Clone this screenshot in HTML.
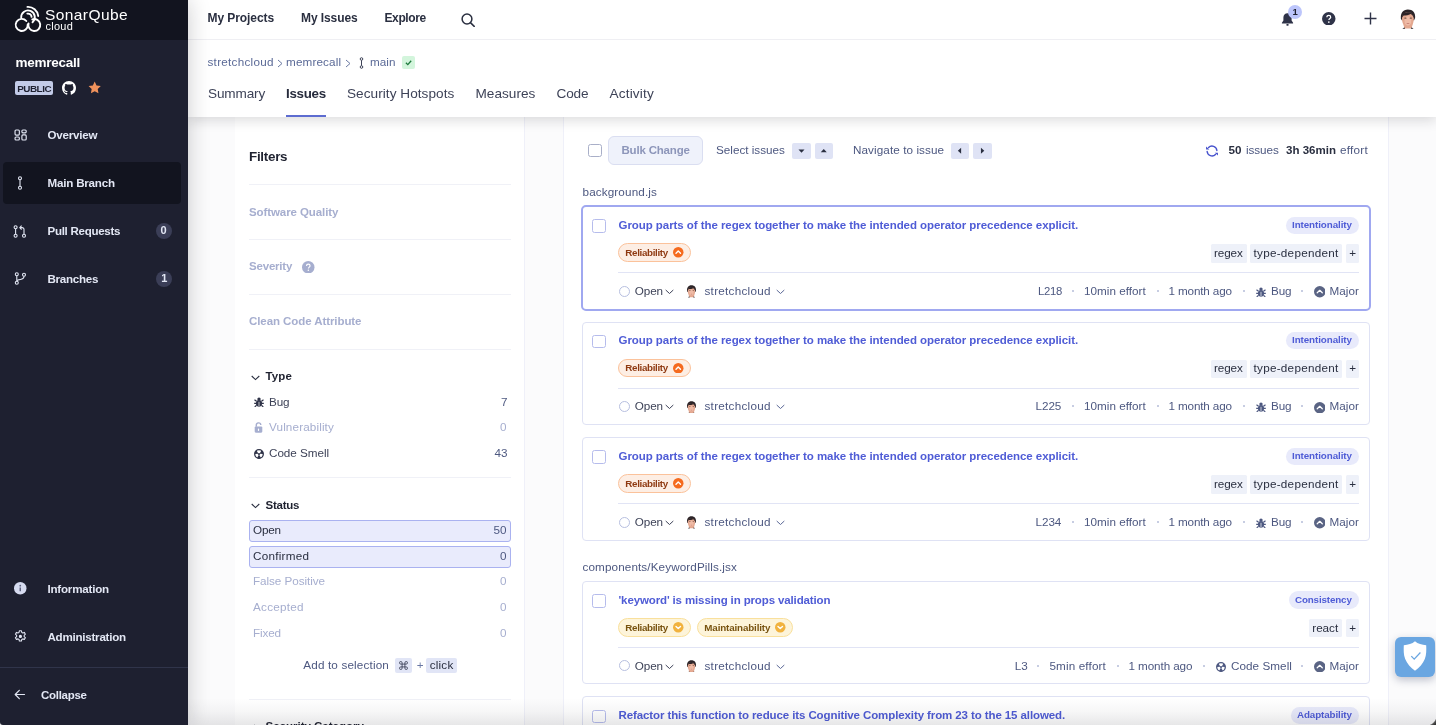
<!DOCTYPE html>
<html lang="en"><head><meta charset="utf-8"><title>memrecall - Issues</title>
<style>
*{box-sizing:border-box;margin:0;padding:0}
html,body{width:1436px;height:725px;overflow:hidden;background:#fff}
body{font-family:"Liberation Sans",sans-serif;position:relative}
.root{position:absolute;left:0;top:0;width:1436px;height:725px;overflow:hidden;will-change:transform;background:#fff}
.b{position:absolute;display:block}
.t{position:absolute;white-space:nowrap;line-height:normal;display:block}
</style></head>
<body>
<div class="root">
<div class="b" style="left:188px;top:0px;width:1248px;height:725px;background:#fbfbfc;"></div>
<div class="b" style="left:235px;top:117px;width:289.5px;height:608px;background:#fff;border-right:1.5px solid #eff0f9;"></div>
<div class="b" style="left:562.5px;top:117px;width:826.5px;height:608px;background:#fff;border-left:1.5px solid #eff0f9;border-right:1.5px solid #eff0f9;"></div>
<span class="t" style="left:249.00px;top:149px;font-size:13.41px;font-weight:700;color:#1f2230;letter-spacing:-0.280px;">Filters</span>
<div class="b" style="left:249px;top:184.0px;width:261.8px;height:1px;background:#f0f1f7;"></div>
<div class="b" style="left:249px;top:239.0px;width:261.8px;height:1px;background:#f0f1f7;"></div>
<div class="b" style="left:249px;top:294.0px;width:261.8px;height:1px;background:#f0f1f7;"></div>
<div class="b" style="left:249px;top:349.0px;width:261.8px;height:1px;background:#f0f1f7;"></div>
<div class="b" style="left:249px;top:477.0px;width:261.8px;height:1px;background:#f0f1f7;"></div>
<div class="b" style="left:249px;top:698.5px;width:261.8px;height:1px;background:#f0f1f7;"></div>
<span class="t" style="left:249.00px;top:206px;font-size:11.5px;font-weight:700;color:#a6aecf;letter-spacing:-0.090px;">Software Quality</span>
<span class="t" style="left:249.00px;top:260px;font-size:11.5px;font-weight:700;color:#a6aecf;letter-spacing:-0.194px;">Severity</span>
<svg class="b" style="left:302px;top:260.5px;" width="12.5" height="12.5" viewBox="0 0 16 16"><circle cx="8" cy="8" r="8" fill="#a6aecf"/><path d="M5.800 6.300c0-1.300 1-2.200 2.300-2.200 1.300 0 2.200.8 2.200 2 0 1.700-2.100 1.700-2.100 3.500" fill="none" stroke="#fff" stroke-width="1.500"/><circle cx="8.100" cy="11.900" r="1" fill="#fff"/></svg>
<span class="t" style="left:249.00px;top:315px;font-size:11.5px;font-weight:700;color:#a6aecf;letter-spacing:-0.077px;">Clean Code Attribute</span>
<svg class="b" style="left:251.3px;top:374.8px;" width="9" height="6" viewBox="0 0 9 6"><path d="M.7 1l3.800 3.600L8.300 1" fill="none" stroke="#2a2f40" stroke-width="1.050"/></svg>
<span class="t" style="left:265.50px;top:370px;font-size:11.5px;font-weight:700;color:#1f2230;letter-spacing:0.136px;">Type</span>
<svg class="b" style="left:254px;top:397.3px;" width="10" height="10" viewBox="0 0 10 10"><g fill="#2f3348"><path d="M1.900 6.300C1.900 4.200 3.200 3 5 3s3.100 1.200 3.100 3.300c0 2-1.300 3.400-3.100 3.400S1.900 8.300 1.900 6.300z"/><ellipse cx="5" cy="2" rx="1.700" ry="1.500"/><path d="M.5 2.700l2 1.600M9.500 2.700l-2 1.600M.2 6.300h2M9.800 6.300h-2M.7 9.900l1.900-1.700M9.300 9.900L7.400 8.200" stroke="#2f3348" stroke-width="1.150" fill="none"/><rect x="4.650" y="4.800" width=".7" height="4.600" fill="#fff"/></g></svg>
<span class="t" style="left:269.00px;top:395px;font-size:11.7px;font-weight:400;color:#3e4358;letter-spacing:-0.148px;">Bug</span>
<span class="t" style="left:501.00px;top:395px;font-size:11.7px;font-weight:400;color:#4d5880;">7</span>
<svg class="b" style="left:254.3px;top:422.3px;" width="9" height="11" viewBox="0 0 9 11"><rect x=".7" y="4.500" width="7.600" height="6.200" rx="1.100" fill="#a6aecf"/><path d="M2.300 4.800V3.300a2.250 2.250 0 0 1 4.500 -.3" fill="none" stroke="#a6aecf" stroke-width="1.400"/><rect x="3.900" y="6.600" width="1.200" height="2.300" rx=".4" fill="#fff"/></svg>
<span class="t" style="left:269.00px;top:420px;font-size:11.7px;font-weight:400;color:#a6aecf;letter-spacing:0.134px;">Vulnerability</span>
<span class="t" style="left:500.00px;top:420px;font-size:11.7px;font-weight:400;color:#a6aecf;">0</span>
<svg class="b" style="left:254px;top:449px;" width="10" height="10" viewBox="0 0 10 10"><circle cx="5" cy="5" r="4.300" fill="none" stroke="#2f3348" stroke-width="1.300"/><circle cx="5" cy="5" r="1.100" fill="#2f3348"/><path d="M5 5L5 9.300M5 5L1.300 2.900M5 5L8.700 2.900" stroke="#2f3348" stroke-width="0" fill="none"/><path d="M5 5.600L3 9.100A4.300 4.300 0 0 0 7 9.100zM4.400 4.700L2.400 1.300A4.300 4.300 0 0 0 .7 4.900zM5.600 4.700L7.600 1.300A4.300 4.300 0 0 1 9.300 4.900z" fill="#2f3348"/></svg>
<span class="t" style="left:269.00px;top:446px;font-size:11.7px;font-weight:400;color:#3e4358;letter-spacing:-0.035px;">Code Smell</span>
<span class="t" style="left:494.50px;top:446px;font-size:11.7px;font-weight:400;color:#4d5880;">43</span>
<svg class="b" style="left:251.3px;top:503.3px;" width="9" height="6" viewBox="0 0 9 6"><path d="M.7 1l3.800 3.600L8.300 1" fill="none" stroke="#2a2f40" stroke-width="1.050"/></svg>
<span class="t" style="left:265.50px;top:499px;font-size:11.5px;font-weight:700;color:#1f2230;letter-spacing:-0.250px;">Status</span>
<div class="b" style="left:249px;top:520px;width:261.8px;height:22px;background:#e9ebfc;border:1px solid #aab2f0;border-radius:3px;"></div>
<span class="t" style="left:253.00px;top:523px;font-size:11.7px;font-weight:400;color:#2a2f40;letter-spacing:-0.197px;">Open</span>
<span class="t" style="left:493.50px;top:523px;font-size:11.7px;font-weight:400;color:#4d5880;">50</span>
<div class="b" style="left:249px;top:545.5px;width:261.8px;height:22px;background:#e9ebfc;border:1px solid #aab2f0;border-radius:3px;"></div>
<span class="t" style="left:253.00px;top:549px;font-size:11.7px;font-weight:400;color:#2a2f40;letter-spacing:0.261px;">Confirmed</span>
<span class="t" style="left:500.00px;top:549px;font-size:11.7px;font-weight:400;color:#4d5880;">0</span>
<span class="t" style="left:253.00px;top:574px;font-size:11.7px;font-weight:400;color:#a6aecf;letter-spacing:-0.058px;">False Positive</span>
<span class="t" style="left:500.00px;top:574px;font-size:11.7px;font-weight:400;color:#a6aecf;">0</span>
<span class="t" style="left:253.00px;top:600px;font-size:11.7px;font-weight:400;color:#a6aecf;letter-spacing:0.253px;">Accepted</span>
<span class="t" style="left:500.00px;top:600px;font-size:11.7px;font-weight:400;color:#a6aecf;">0</span>
<span class="t" style="left:253.00px;top:626px;font-size:11.7px;font-weight:400;color:#a6aecf;letter-spacing:-0.145px;">Fixed</span>
<span class="t" style="left:500.00px;top:626px;font-size:11.7px;font-weight:400;color:#a6aecf;">0</span>
<span class="t" style="left:303.30px;top:658px;font-size:11.7px;font-weight:400;color:#4d5880;letter-spacing:0.156px;">Add to selection</span>
<div class="b" style="left:395.4px;top:657.7px;width:16.8px;height:15.3px;background:#e1e5f6;border-radius:2px;"></div>
<svg class="b" style="left:399px;top:660.9px;" width="9" height="9" viewBox="0 0 9 9"><path d="M3.100 3.100V1.800A1.300 1.300 0 1 0 1.800 3.100H7.200A1.300 1.300 0 1 0 5.900 1.800V7.200A1.300 1.300 0 1 0 7.200 5.900H1.800A1.300 1.300 0 1 0 3.100 7.200z" fill="none" stroke="#3a3f55" stroke-width=".85"/></svg>
<span class="t" style="left:416.70px;top:658px;font-size:11.7px;font-weight:400;color:#6a78a4;">+</span>
<div class="b" style="left:426px;top:657.7px;width:31px;height:15.3px;background:#e1e5f6;border-radius:2px;"></div>
<span class="t" style="left:429.80px;top:658px;font-size:11.7px;font-weight:400;color:#2a2f40;letter-spacing:0.180px;">click</span>
<svg class="b" style="left:252.5px;top:724px;" width="6" height="9" viewBox="0 0 6 9"><path d="M1 1l4 3.500-4 3.500" fill="none" stroke="#2a2f40" stroke-width="1.050"/></svg>
<span class="t" style="left:265.50px;top:720px;font-size:11.5px;font-weight:700;color:#1f2230;letter-spacing:-0.002px;">Security Category</span>
<div class="b" style="left:588px;top:144px;width:14px;height:13px;background:#fff;border:1px solid #a9afc8;border-radius:2.5px;"></div>
<div class="b" style="left:608px;top:136px;width:94.5px;height:29px;background:#eff2fb;border:1px solid #dadef1;border-radius:6px;"></div>
<span class="t" style="left:621.50px;top:144px;font-size:11.5px;font-weight:700;color:#8d96ba;letter-spacing:-0.189px;">Bulk Change</span>
<span class="t" style="left:716.00px;top:143px;font-size:11.7px;font-weight:400;color:#4d5880;letter-spacing:-0.001px;">Select issues</span>
<div class="b" style="left:792px;top:143px;width:19px;height:15.5px;background:#dfe3f5;border-radius:2px;"></div>
<svg class="b" style="left:0;top:0" width="1436" height="200"><polygon points="798.5,149.5 804.5,149.5 801.5,152.8" fill="#2a2f40"/></svg>
<div class="b" style="left:814.5px;top:143px;width:18.5px;height:15.5px;background:#dfe3f5;border-radius:2px;"></div>
<svg class="b" style="left:0;top:0" width="1436" height="200"><polygon points="820.75,152.3 826.75,152.3 823.75,149.0" fill="#2a2f40"/></svg>
<span class="t" style="left:853.00px;top:143px;font-size:11.7px;font-weight:400;color:#4d5880;letter-spacing:0.084px;">Navigate to issue</span>
<div class="b" style="left:950.5px;top:143px;width:18.5px;height:15.5px;background:#dfe3f5;border-radius:2px;"></div>
<svg class="b" style="left:0;top:0" width="1436" height="200"><polygon points="961.15,147.8 961.15,153.8 957.85,150.8" fill="#2a2f40"/></svg>
<div class="b" style="left:973px;top:143px;width:18.7px;height:15.5px;background:#dfe3f5;border-radius:2px;"></div>
<svg class="b" style="left:0;top:0" width="1436" height="200"><polygon points="980.95,147.8 980.95,153.8 984.25,150.8" fill="#2a2f40"/></svg>
<svg class="b" style="left:1205.4px;top:143.8px;" width="14" height="14" viewBox="0 0 14 14"><g fill="none" stroke="#4551cd" stroke-width="1.400" stroke-linecap="round"><path d="M11.870 6.490A4.900 4.900 0 0 0 3.540 3.540"/><path d="M2.130 7.510A4.900 4.900 0 0 0 10.460 10.460"/></g><path d="M1.070 2.600V5.500H4.400zM12.930 11.500V8.800H9.700z" fill="#4551cd"/></svg>
<span class="t" style="left:1228.50px;top:143px;font-size:11.7px;font-weight:700;color:#2a2f40;">50</span>
<span class="t" style="left:1246.00px;top:143px;font-size:11.7px;font-weight:400;color:#4d5880;letter-spacing:-0.057px;">issues</span>
<span class="t" style="left:1286.00px;top:144px;font-size:11.5px;font-weight:700;color:#2a2f40;letter-spacing:0.025px;">3h 36min</span>
<span class="t" style="left:1340.00px;top:143px;font-size:11.7px;font-weight:400;color:#4d5880;letter-spacing:0.265px;">effort</span>
<span class="t" style="left:582.50px;top:185px;font-size:11.7px;font-weight:400;color:#4d5880;letter-spacing:0.131px;">background.js</span>
<div class="b" style="left:580.7px;top:205.2px;width:790.3px;height:105.79999999999998px;background:#fff;border:2px solid #a0a8f0;border-radius:5px;"></div>
<div class="b" style="left:592.3px;top:219.0px;width:13.7px;height:13.7px;background:#fff;border:1px solid #b6bcec;border-radius:2.5px;"></div>
<span class="t" style="left:618.50px;top:219px;font-size:11.5px;font-weight:700;color:#4f5cd6;letter-spacing:-0.059px;">Group parts of the regex together to make the intended operator precedence explicit.</span>
<div class="b" style="left:618px;top:272.0px;width:741px;height:1px;background:#e1e4f5;"></div>
<div class="b" style="left:619px;top:285.5px;width:11px;height:11px;background:#fff;border:1px solid #b7bfe0;border-radius:6px;"></div>
<span class="t" style="left:634.80px;top:284px;font-size:11.7px;font-weight:400;color:#3e4358;letter-spacing:-0.130px;">Open</span>
<svg class="b" style="left:664.8px;top:288.8px;" width="9" height="6" viewBox="0 0 9 6"><path d="M.7 1l3.800 3.500L8.300 1" fill="none" stroke="#3e4358" stroke-width="1"/></svg>
<svg class="b" style="left:686px;top:285.0px;" width="11" height="12.5" viewBox="0 0 16 20"><path d="M.9 9.800C.2 4.200 3 .4 7.900 .4c4.900 0 7.700 3.400 7.200 8.600l-1 2.200H1.800z" fill="#2b2327"/><path d="M2 9c0-3.600 2.400-5.600 5.900-5.600S13.800 5.400 13.800 9c0 2.400-.3 4.400-1 6.300-.6 1.700-1 3-1 4.100H4.200c0-1.100-.4-2.400-1-4.100C2.300 13.400 2 11.400 2 9z" fill="#e3a78f"/><ellipse cx="7.900" cy="11.800" rx="3.400" ry="4.600" fill="#efbba6"/><path d="M1.600 9.600c.2-3.600 1.800-6.400 6.300-6.400 4.300 0 6.200 2.400 6.300 6-.9-1.700-1.700-3.300-3.600-4.200-2.100 1.100-4.900 1.500-6.900 1.500-.9.800-1.600 1.800-2.100 3.100z" fill="#2b2327"/><ellipse cx="5.400" cy="9.100" rx="1.300" ry=".55" fill="#6d4a3c"/><ellipse cx="10.800" cy="9.100" rx="1.300" ry=".55" fill="#6d4a3c"/><ellipse cx="8" cy="14.500" rx="1.600" ry=".5" fill="#c98378"/><path d="M2.600 19.800c.3-.8 1-1.200 2.100-1.300l.4 1.300zM13.400 19.800c-.3-.8-1-1.200-2.100-1.300l-.4 1.300z" fill="#26262c"/></svg>
<span class="t" style="left:704.50px;top:284px;font-size:11.7px;font-weight:400;color:#4d5880;letter-spacing:0.271px;">stretchcloud</span>
<svg class="b" style="left:776.2px;top:288.8px;" width="9" height="6" viewBox="0 0 9 6"><path d="M.7 1l3.800 3.500L8.300 1" fill="none" stroke="#5b6896" stroke-width="1"/></svg>
<div class="b" style="left:618px;top:243.1px;width:72.7px;height:18.5px;background:#fdeee4;border:1px solid #fbc29b;border-radius:9.5px;"></div>
<span class="t" style="left:625.30px;top:247px;font-size:9.8px;font-weight:700;color:#8f3a12;letter-spacing:-0.333px;">Reliability</span>
<svg class="b" style="left:673.0px;top:247.1px;" width="10.5" height="10.5" viewBox="0 0 10.5 10.5"><circle cx="5.250" cy="5.250" r="5.250" fill="#f56a1e"/><path d="M3 6.200L5.250 4l2.250 2.200" fill="none" stroke="#fff" stroke-width="1.400" stroke-linecap="round" stroke-linejoin="round"/></svg>
<div class="b" style="left:1285.5px;top:216.5px;width:73.5px;height:17.3px;background:#e8eafb;border-radius:9px;"></div>
<span class="t" style="left:1292.00px;top:219px;font-size:9.8px;font-weight:700;color:#4f5cd6;letter-spacing:-0.078px;">Intentionality</span>
<div class="b" style="left:1210.5px;top:244.0px;width:36.5px;height:18.5px;background:#eef1f9;border-radius:1.5px;"></div>
<span class="t" style="left:1214.00px;top:246px;font-size:11.7px;font-weight:400;color:#2a2f40;letter-spacing:-0.098px;">regex</span>
<div class="b" style="left:1250px;top:244.0px;width:92px;height:18.5px;background:#eef1f9;border-radius:1.5px;"></div>
<span class="t" style="left:1253.50px;top:246px;font-size:11.7px;font-weight:400;color:#2a2f40;letter-spacing:0.271px;">type-dependent</span>
<div class="b" style="left:1345.5px;top:244.0px;width:13.5px;height:18.5px;background:#eef1f9;border-radius:1.5px;"></div>
<span class="t" style="left:1349.20px;top:246px;font-size:11.7px;font-weight:400;color:#2a2f40;">+</span>
<span class="t" style="left:1038.00px;top:285px;font-size:11.31px;font-weight:400;color:#4d5880;letter-spacing:-0.280px;">L218</span>
<div class="b" style="left:1072px;top:289.7px;width:2px;height:2px;background:#b4bcd9;border-radius:1px;"></div>
<span class="t" style="left:1084.00px;top:284px;font-size:11.7px;font-weight:400;color:#4d5880;letter-spacing:0.022px;">10min effort</span>
<div class="b" style="left:1156.5px;top:289.7px;width:2px;height:2px;background:#b4bcd9;border-radius:1px;"></div>
<span class="t" style="left:1168.50px;top:284px;font-size:11.7px;font-weight:400;color:#4d5880;letter-spacing:-0.148px;">1 month ago</span>
<div class="b" style="left:1242.8px;top:289.7px;width:2px;height:2px;background:#b4bcd9;border-radius:1px;"></div>
<svg class="b" style="left:1256px;top:286.8px;" width="10" height="10" viewBox="0 0 10 10"><g fill="#4d5880"><path d="M1.900 6.300C1.900 4.200 3.200 3 5 3s3.100 1.200 3.100 3.300c0 2-1.300 3.400-3.100 3.400S1.900 8.300 1.900 6.300z"/><ellipse cx="5" cy="2" rx="1.700" ry="1.500"/><path d="M.5 2.700l2 1.600M9.500 2.700l-2 1.600M.2 6.300h2M9.800 6.300h-2M.7 9.900l1.900-1.700M9.300 9.900L7.400 8.200" stroke="#4d5880" stroke-width="1.150" fill="none"/><rect x="4.650" y="4.800" width=".7" height="4.600" fill="#fff"/></g></svg>
<span class="t" style="left:1271.00px;top:284px;font-size:11.7px;font-weight:400;color:#4d5880;letter-spacing:-0.148px;">Bug</span>
<div class="b" style="left:1301px;top:289.7px;width:2px;height:2px;background:#b4bcd9;border-radius:1px;"></div>
<svg class="b" style="left:1313.5px;top:286.0px;" width="11.5" height="11.5" viewBox="0 0 11.5 11.5"><circle cx="5.750" cy="5.750" r="5.750" fill="#5a6484"/><path d="M3.200 6.800L5.750 4.300l2.550 2.500" fill="none" stroke="#fff" stroke-width="1.250" stroke-linecap="round" stroke-linejoin="round"/></svg>
<span class="t" style="left:1329.50px;top:284px;font-size:11.7px;font-weight:400;color:#4d5880;letter-spacing:0.042px;">Major</span>
<div class="b" style="left:581.5px;top:321.5px;width:788.5px;height:103.5px;background:#fff;border:1px solid #dfe2f4;border-radius:4px;"></div>
<div class="b" style="left:592.3px;top:334.5px;width:13.7px;height:13.7px;background:#fff;border:1px solid #b6bcec;border-radius:2.5px;"></div>
<span class="t" style="left:618.50px;top:334px;font-size:11.5px;font-weight:700;color:#4f5cd6;letter-spacing:-0.059px;">Group parts of the regex together to make the intended operator precedence explicit.</span>
<div class="b" style="left:618px;top:387.5px;width:741px;height:1px;background:#e1e4f5;"></div>
<div class="b" style="left:619px;top:401px;width:11px;height:11px;background:#fff;border:1px solid #b7bfe0;border-radius:6px;"></div>
<span class="t" style="left:634.80px;top:399px;font-size:11.7px;font-weight:400;color:#3e4358;letter-spacing:-0.130px;">Open</span>
<svg class="b" style="left:664.8px;top:404.3px;" width="9" height="6" viewBox="0 0 9 6"><path d="M.7 1l3.800 3.500L8.300 1" fill="none" stroke="#3e4358" stroke-width="1"/></svg>
<svg class="b" style="left:686px;top:400.5px;" width="11" height="12.5" viewBox="0 0 16 20"><path d="M.9 9.800C.2 4.200 3 .4 7.900 .4c4.900 0 7.700 3.400 7.200 8.600l-1 2.200H1.800z" fill="#2b2327"/><path d="M2 9c0-3.600 2.400-5.600 5.900-5.600S13.800 5.400 13.800 9c0 2.400-.3 4.400-1 6.300-.6 1.700-1 3-1 4.100H4.200c0-1.100-.4-2.400-1-4.100C2.300 13.400 2 11.400 2 9z" fill="#e3a78f"/><ellipse cx="7.900" cy="11.800" rx="3.400" ry="4.600" fill="#efbba6"/><path d="M1.600 9.600c.2-3.600 1.800-6.400 6.300-6.400 4.300 0 6.200 2.400 6.300 6-.9-1.700-1.700-3.300-3.600-4.200-2.100 1.100-4.900 1.500-6.900 1.500-.9.800-1.600 1.800-2.100 3.100z" fill="#2b2327"/><ellipse cx="5.400" cy="9.100" rx="1.300" ry=".55" fill="#6d4a3c"/><ellipse cx="10.800" cy="9.100" rx="1.300" ry=".55" fill="#6d4a3c"/><ellipse cx="8" cy="14.500" rx="1.600" ry=".5" fill="#c98378"/><path d="M2.600 19.800c.3-.8 1-1.200 2.100-1.300l.4 1.300zM13.400 19.800c-.3-.8-1-1.200-2.100-1.300l-.4 1.300z" fill="#26262c"/></svg>
<span class="t" style="left:704.50px;top:399px;font-size:11.7px;font-weight:400;color:#4d5880;letter-spacing:0.271px;">stretchcloud</span>
<svg class="b" style="left:776.2px;top:404.3px;" width="9" height="6" viewBox="0 0 9 6"><path d="M.7 1l3.800 3.500L8.300 1" fill="none" stroke="#5b6896" stroke-width="1"/></svg>
<div class="b" style="left:618px;top:358.6px;width:72.7px;height:18.5px;background:#fdeee4;border:1px solid #fbc29b;border-radius:9.5px;"></div>
<span class="t" style="left:625.30px;top:362px;font-size:9.8px;font-weight:700;color:#8f3a12;letter-spacing:-0.333px;">Reliability</span>
<svg class="b" style="left:673.0px;top:362.6px;" width="10.5" height="10.5" viewBox="0 0 10.5 10.5"><circle cx="5.250" cy="5.250" r="5.250" fill="#f56a1e"/><path d="M3 6.200L5.250 4l2.250 2.200" fill="none" stroke="#fff" stroke-width="1.400" stroke-linecap="round" stroke-linejoin="round"/></svg>
<div class="b" style="left:1285.5px;top:332px;width:73.5px;height:17.3px;background:#e8eafb;border-radius:9px;"></div>
<span class="t" style="left:1292.00px;top:334px;font-size:9.8px;font-weight:700;color:#4f5cd6;letter-spacing:-0.078px;">Intentionality</span>
<div class="b" style="left:1210.5px;top:359.5px;width:36.5px;height:18.5px;background:#eef1f9;border-radius:1.5px;"></div>
<span class="t" style="left:1214.00px;top:361px;font-size:11.7px;font-weight:400;color:#2a2f40;letter-spacing:-0.098px;">regex</span>
<div class="b" style="left:1250px;top:359.5px;width:92px;height:18.5px;background:#eef1f9;border-radius:1.5px;"></div>
<span class="t" style="left:1253.50px;top:361px;font-size:11.7px;font-weight:400;color:#2a2f40;letter-spacing:0.271px;">type-dependent</span>
<div class="b" style="left:1345.5px;top:359.5px;width:13.5px;height:18.5px;background:#eef1f9;border-radius:1.5px;"></div>
<span class="t" style="left:1349.20px;top:361px;font-size:11.7px;font-weight:400;color:#2a2f40;">+</span>
<span class="t" style="left:1035.60px;top:399px;font-size:11.7px;font-weight:400;color:#4d5880;letter-spacing:-0.100px;">L225</span>
<div class="b" style="left:1072px;top:405.2px;width:2px;height:2px;background:#b4bcd9;border-radius:1px;"></div>
<span class="t" style="left:1084.00px;top:399px;font-size:11.7px;font-weight:400;color:#4d5880;letter-spacing:0.022px;">10min effort</span>
<div class="b" style="left:1156.5px;top:405.2px;width:2px;height:2px;background:#b4bcd9;border-radius:1px;"></div>
<span class="t" style="left:1168.50px;top:399px;font-size:11.7px;font-weight:400;color:#4d5880;letter-spacing:-0.148px;">1 month ago</span>
<div class="b" style="left:1242.8px;top:405.2px;width:2px;height:2px;background:#b4bcd9;border-radius:1px;"></div>
<svg class="b" style="left:1256px;top:402.3px;" width="10" height="10" viewBox="0 0 10 10"><g fill="#4d5880"><path d="M1.900 6.300C1.900 4.200 3.200 3 5 3s3.100 1.200 3.100 3.300c0 2-1.300 3.400-3.100 3.400S1.900 8.300 1.900 6.300z"/><ellipse cx="5" cy="2" rx="1.700" ry="1.500"/><path d="M.5 2.700l2 1.600M9.500 2.700l-2 1.600M.2 6.300h2M9.800 6.300h-2M.7 9.900l1.900-1.700M9.300 9.900L7.400 8.200" stroke="#4d5880" stroke-width="1.150" fill="none"/><rect x="4.650" y="4.800" width=".7" height="4.600" fill="#fff"/></g></svg>
<span class="t" style="left:1271.00px;top:399px;font-size:11.7px;font-weight:400;color:#4d5880;letter-spacing:-0.148px;">Bug</span>
<div class="b" style="left:1301px;top:405.2px;width:2px;height:2px;background:#b4bcd9;border-radius:1px;"></div>
<svg class="b" style="left:1313.5px;top:401.5px;" width="11.5" height="11.5" viewBox="0 0 11.5 11.5"><circle cx="5.750" cy="5.750" r="5.750" fill="#5a6484"/><path d="M3.200 6.800L5.750 4.300l2.550 2.500" fill="none" stroke="#fff" stroke-width="1.250" stroke-linecap="round" stroke-linejoin="round"/></svg>
<span class="t" style="left:1329.50px;top:399px;font-size:11.7px;font-weight:400;color:#4d5880;letter-spacing:0.042px;">Major</span>
<div class="b" style="left:581.5px;top:437px;width:788.5px;height:103.70000000000005px;background:#fff;border:1px solid #dfe2f4;border-radius:4px;"></div>
<div class="b" style="left:592.3px;top:450.0px;width:13.7px;height:13.7px;background:#fff;border:1px solid #b6bcec;border-radius:2.5px;"></div>
<span class="t" style="left:618.50px;top:450px;font-size:11.5px;font-weight:700;color:#4f5cd6;letter-spacing:-0.059px;">Group parts of the regex together to make the intended operator precedence explicit.</span>
<div class="b" style="left:618px;top:503.0px;width:741px;height:1px;background:#e1e4f5;"></div>
<div class="b" style="left:619px;top:516.5px;width:11px;height:11px;background:#fff;border:1px solid #b7bfe0;border-radius:6px;"></div>
<span class="t" style="left:634.80px;top:515px;font-size:11.7px;font-weight:400;color:#3e4358;letter-spacing:-0.130px;">Open</span>
<svg class="b" style="left:664.8px;top:519.8px;" width="9" height="6" viewBox="0 0 9 6"><path d="M.7 1l3.800 3.500L8.300 1" fill="none" stroke="#3e4358" stroke-width="1"/></svg>
<svg class="b" style="left:686px;top:516.0px;" width="11" height="12.5" viewBox="0 0 16 20"><path d="M.9 9.800C.2 4.200 3 .4 7.900 .4c4.900 0 7.700 3.400 7.200 8.600l-1 2.200H1.800z" fill="#2b2327"/><path d="M2 9c0-3.600 2.400-5.600 5.900-5.600S13.800 5.400 13.800 9c0 2.400-.3 4.400-1 6.300-.6 1.700-1 3-1 4.100H4.200c0-1.100-.4-2.400-1-4.100C2.300 13.400 2 11.400 2 9z" fill="#e3a78f"/><ellipse cx="7.900" cy="11.800" rx="3.400" ry="4.600" fill="#efbba6"/><path d="M1.600 9.600c.2-3.600 1.800-6.400 6.300-6.400 4.300 0 6.200 2.400 6.300 6-.9-1.700-1.700-3.300-3.600-4.200-2.100 1.100-4.900 1.500-6.900 1.500-.9.800-1.600 1.800-2.100 3.100z" fill="#2b2327"/><ellipse cx="5.400" cy="9.100" rx="1.300" ry=".55" fill="#6d4a3c"/><ellipse cx="10.800" cy="9.100" rx="1.300" ry=".55" fill="#6d4a3c"/><ellipse cx="8" cy="14.500" rx="1.600" ry=".5" fill="#c98378"/><path d="M2.600 19.800c.3-.8 1-1.200 2.100-1.300l.4 1.300zM13.400 19.800c-.3-.8-1-1.200-2.100-1.300l-.4 1.300z" fill="#26262c"/></svg>
<span class="t" style="left:704.50px;top:515px;font-size:11.7px;font-weight:400;color:#4d5880;letter-spacing:0.271px;">stretchcloud</span>
<svg class="b" style="left:776.2px;top:519.8px;" width="9" height="6" viewBox="0 0 9 6"><path d="M.7 1l3.800 3.500L8.300 1" fill="none" stroke="#5b6896" stroke-width="1"/></svg>
<div class="b" style="left:618px;top:474.1px;width:72.7px;height:18.5px;background:#fdeee4;border:1px solid #fbc29b;border-radius:9.5px;"></div>
<span class="t" style="left:625.30px;top:478px;font-size:9.8px;font-weight:700;color:#8f3a12;letter-spacing:-0.333px;">Reliability</span>
<svg class="b" style="left:673.0px;top:478.1px;" width="10.5" height="10.5" viewBox="0 0 10.5 10.5"><circle cx="5.250" cy="5.250" r="5.250" fill="#f56a1e"/><path d="M3 6.200L5.250 4l2.250 2.200" fill="none" stroke="#fff" stroke-width="1.400" stroke-linecap="round" stroke-linejoin="round"/></svg>
<div class="b" style="left:1285.5px;top:447.5px;width:73.5px;height:17.3px;background:#e8eafb;border-radius:9px;"></div>
<span class="t" style="left:1292.00px;top:450px;font-size:9.8px;font-weight:700;color:#4f5cd6;letter-spacing:-0.078px;">Intentionality</span>
<div class="b" style="left:1210.5px;top:475.0px;width:36.5px;height:18.5px;background:#eef1f9;border-radius:1.5px;"></div>
<span class="t" style="left:1214.00px;top:477px;font-size:11.7px;font-weight:400;color:#2a2f40;letter-spacing:-0.098px;">regex</span>
<div class="b" style="left:1250px;top:475.0px;width:92px;height:18.5px;background:#eef1f9;border-radius:1.5px;"></div>
<span class="t" style="left:1253.50px;top:477px;font-size:11.7px;font-weight:400;color:#2a2f40;letter-spacing:0.271px;">type-dependent</span>
<div class="b" style="left:1345.5px;top:475.0px;width:13.5px;height:18.5px;background:#eef1f9;border-radius:1.5px;"></div>
<span class="t" style="left:1349.20px;top:477px;font-size:11.7px;font-weight:400;color:#2a2f40;">+</span>
<span class="t" style="left:1035.60px;top:515px;font-size:11.7px;font-weight:400;color:#4d5880;letter-spacing:-0.100px;">L234</span>
<div class="b" style="left:1072px;top:520.7px;width:2px;height:2px;background:#b4bcd9;border-radius:1px;"></div>
<span class="t" style="left:1084.00px;top:515px;font-size:11.7px;font-weight:400;color:#4d5880;letter-spacing:0.022px;">10min effort</span>
<div class="b" style="left:1156.5px;top:520.7px;width:2px;height:2px;background:#b4bcd9;border-radius:1px;"></div>
<span class="t" style="left:1168.50px;top:515px;font-size:11.7px;font-weight:400;color:#4d5880;letter-spacing:-0.148px;">1 month ago</span>
<div class="b" style="left:1242.8px;top:520.7px;width:2px;height:2px;background:#b4bcd9;border-radius:1px;"></div>
<svg class="b" style="left:1256px;top:517.8px;" width="10" height="10" viewBox="0 0 10 10"><g fill="#4d5880"><path d="M1.900 6.300C1.900 4.200 3.200 3 5 3s3.100 1.200 3.100 3.300c0 2-1.300 3.400-3.100 3.400S1.900 8.300 1.900 6.300z"/><ellipse cx="5" cy="2" rx="1.700" ry="1.500"/><path d="M.5 2.700l2 1.600M9.500 2.700l-2 1.600M.2 6.300h2M9.800 6.300h-2M.7 9.900l1.900-1.700M9.300 9.900L7.400 8.200" stroke="#4d5880" stroke-width="1.150" fill="none"/><rect x="4.650" y="4.800" width=".7" height="4.600" fill="#fff"/></g></svg>
<span class="t" style="left:1271.00px;top:515px;font-size:11.7px;font-weight:400;color:#4d5880;letter-spacing:-0.148px;">Bug</span>
<div class="b" style="left:1301px;top:520.7px;width:2px;height:2px;background:#b4bcd9;border-radius:1px;"></div>
<svg class="b" style="left:1313.5px;top:517.0px;" width="11.5" height="11.5" viewBox="0 0 11.5 11.5"><circle cx="5.750" cy="5.750" r="5.750" fill="#5a6484"/><path d="M3.200 6.800L5.750 4.300l2.550 2.500" fill="none" stroke="#fff" stroke-width="1.250" stroke-linecap="round" stroke-linejoin="round"/></svg>
<span class="t" style="left:1329.50px;top:515px;font-size:11.7px;font-weight:400;color:#4d5880;letter-spacing:0.042px;">Major</span>
<span class="t" style="left:582.50px;top:560px;font-size:11.7px;font-weight:400;color:#4d5880;letter-spacing:0.115px;">components/KeywordPills.jsx</span>
<div class="b" style="left:581.5px;top:580.8px;width:788.5px;height:103.5px;background:#fff;border:1px solid #dfe2f4;border-radius:4px;"></div>
<div class="b" style="left:592.3px;top:593.9px;width:13.7px;height:13.7px;background:#fff;border:1px solid #b6bcec;border-radius:2.5px;"></div>
<span class="t" style="left:618.50px;top:594px;font-size:11.5px;font-weight:700;color:#4f5cd6;letter-spacing:-0.127px;">'keyword' is missing in props validation</span>
<div class="b" style="left:618px;top:646.9px;width:741px;height:1px;background:#e1e4f5;"></div>
<div class="b" style="left:619px;top:660.4px;width:11px;height:11px;background:#fff;border:1px solid #b7bfe0;border-radius:6px;"></div>
<span class="t" style="left:634.80px;top:659px;font-size:11.7px;font-weight:400;color:#3e4358;letter-spacing:-0.130px;">Open</span>
<svg class="b" style="left:664.8px;top:663.6999999999999px;" width="9" height="6" viewBox="0 0 9 6"><path d="M.7 1l3.800 3.500L8.300 1" fill="none" stroke="#3e4358" stroke-width="1"/></svg>
<svg class="b" style="left:686px;top:659.9px;" width="11" height="12.5" viewBox="0 0 16 20"><path d="M.9 9.800C.2 4.200 3 .4 7.900 .4c4.900 0 7.700 3.400 7.200 8.600l-1 2.200H1.800z" fill="#2b2327"/><path d="M2 9c0-3.600 2.400-5.600 5.900-5.600S13.800 5.400 13.800 9c0 2.400-.3 4.400-1 6.300-.6 1.700-1 3-1 4.100H4.200c0-1.100-.4-2.400-1-4.100C2.300 13.400 2 11.400 2 9z" fill="#e3a78f"/><ellipse cx="7.900" cy="11.800" rx="3.400" ry="4.600" fill="#efbba6"/><path d="M1.600 9.600c.2-3.600 1.800-6.400 6.300-6.400 4.300 0 6.200 2.400 6.300 6-.9-1.700-1.700-3.300-3.600-4.200-2.100 1.100-4.900 1.500-6.900 1.500-.9.800-1.600 1.800-2.100 3.100z" fill="#2b2327"/><ellipse cx="5.400" cy="9.100" rx="1.300" ry=".55" fill="#6d4a3c"/><ellipse cx="10.800" cy="9.100" rx="1.300" ry=".55" fill="#6d4a3c"/><ellipse cx="8" cy="14.500" rx="1.600" ry=".5" fill="#c98378"/><path d="M2.600 19.800c.3-.8 1-1.200 2.100-1.300l.4 1.300zM13.400 19.800c-.3-.8-1-1.200-2.100-1.300l-.4 1.300z" fill="#26262c"/></svg>
<span class="t" style="left:704.50px;top:659px;font-size:11.7px;font-weight:400;color:#4d5880;letter-spacing:0.271px;">stretchcloud</span>
<svg class="b" style="left:776.2px;top:663.6999999999999px;" width="9" height="6" viewBox="0 0 9 6"><path d="M.7 1l3.800 3.500L8.300 1" fill="none" stroke="#5b6896" stroke-width="1"/></svg>
<div class="b" style="left:618px;top:618.0px;width:72.7px;height:18.5px;background:#fdf4da;border:1px solid #f9e09c;border-radius:9.5px;"></div>
<span class="t" style="left:625.30px;top:622px;font-size:9.8px;font-weight:700;color:#785310;letter-spacing:-0.333px;">Reliability</span>
<svg class="b" style="left:673.0px;top:622.0px;" width="10.5" height="10.5" viewBox="0 0 10.5 10.5"><circle cx="5.250" cy="5.250" r="5.250" fill="#f1b23e"/><path d="M3 4.400L5.250 6.600l2.250-2.200" fill="none" stroke="#fff" stroke-width="1.400" stroke-linecap="round" stroke-linejoin="round"/></svg>
<div class="b" style="left:697px;top:618.0px;width:95.9px;height:18.5px;background:#fdf4da;border:1px solid #f9e09c;border-radius:9.5px;"></div>
<span class="t" style="left:704.30px;top:622px;font-size:9.8px;font-weight:700;color:#785310;letter-spacing:-0.135px;">Maintainability</span>
<svg class="b" style="left:775.2px;top:622.0px;" width="10.5" height="10.5" viewBox="0 0 10.5 10.5"><circle cx="5.250" cy="5.250" r="5.250" fill="#f1b23e"/><path d="M3 4.400L5.250 6.600l2.250-2.200" fill="none" stroke="#fff" stroke-width="1.400" stroke-linecap="round" stroke-linejoin="round"/></svg>
<div class="b" style="left:1289px;top:591.4px;width:70px;height:17.3px;background:#e8eafb;border-radius:9px;"></div>
<span class="t" style="left:1295.00px;top:594px;font-size:9.8px;font-weight:700;color:#4f5cd6;letter-spacing:-0.141px;">Consistency</span>
<div class="b" style="left:1309px;top:618.9px;width:33px;height:18.5px;background:#eef1f9;border-radius:1.5px;"></div>
<span class="t" style="left:1312.30px;top:621px;font-size:11.7px;font-weight:400;color:#2a2f40;letter-spacing:-0.034px;">react</span>
<div class="b" style="left:1345.5px;top:618.9px;width:13.5px;height:18.5px;background:#eef1f9;border-radius:1.5px;"></div>
<span class="t" style="left:1349.20px;top:621px;font-size:11.7px;font-weight:400;color:#2a2f40;">+</span>
<span class="t" style="left:1014.80px;top:659px;font-size:11.7px;font-weight:400;color:#4d5880;">L3</span>
<div class="b" style="left:1037.4px;top:664.6px;width:2px;height:2px;background:#b4bcd9;border-radius:1px;"></div>
<span class="t" style="left:1049.40px;top:659px;font-size:11.7px;font-weight:400;color:#4d5880;letter-spacing:0.145px;">5min effort</span>
<div class="b" style="left:1117px;top:664.6px;width:2px;height:2px;background:#b4bcd9;border-radius:1px;"></div>
<span class="t" style="left:1128.50px;top:659px;font-size:11.7px;font-weight:400;color:#4d5880;letter-spacing:-0.098px;">1 month ago</span>
<div class="b" style="left:1203.3px;top:664.6px;width:2px;height:2px;background:#b4bcd9;border-radius:1px;"></div>
<svg class="b" style="left:1216.3px;top:661.6999999999999px;" width="10" height="10" viewBox="0 0 10 10"><circle cx="5" cy="5" r="4.300" fill="none" stroke="#4d5880" stroke-width="1.300"/><circle cx="5" cy="5" r="1.100" fill="#4d5880"/><path d="M5 5L5 9.300M5 5L1.300 2.900M5 5L8.700 2.900" stroke="#4d5880" stroke-width="0" fill="none"/><path d="M5 5.600L3 9.100A4.300 4.300 0 0 0 7 9.100zM4.400 4.700L2.400 1.300A4.300 4.300 0 0 0 .7 4.900zM5.600 4.700L7.600 1.300A4.300 4.300 0 0 1 9.300 4.900z" fill="#4d5880"/></svg>
<span class="t" style="left:1231.00px;top:659px;font-size:11.7px;font-weight:400;color:#4d5880;letter-spacing:0.054px;">Code Smell</span>
<div class="b" style="left:1301.2px;top:664.6px;width:2px;height:2px;background:#b4bcd9;border-radius:1px;"></div>
<svg class="b" style="left:1313.5px;top:660.9px;" width="11.5" height="11.5" viewBox="0 0 11.5 11.5"><circle cx="5.750" cy="5.750" r="5.750" fill="#5a6484"/><path d="M3.200 6.800L5.750 4.300l2.550 2.500" fill="none" stroke="#fff" stroke-width="1.250" stroke-linecap="round" stroke-linejoin="round"/></svg>
<span class="t" style="left:1329.50px;top:659px;font-size:11.7px;font-weight:400;color:#4d5880;letter-spacing:0.042px;">Major</span>
<div class="b" style="left:581.5px;top:696.3px;width:788.5px;height:103.70000000000005px;background:#fff;border:1px solid #dfe2f4;border-radius:4px;"></div>
<div class="b" style="left:592.3px;top:709.5px;width:13.7px;height:13.7px;background:#fff;border:1px solid #b6bcec;border-radius:2.5px;"></div>
<span class="t" style="left:618.50px;top:709px;font-size:11.5px;font-weight:700;color:#4f5cd6;letter-spacing:-0.100px;">Refactor this function to reduce its Cognitive Complexity from 23 to the 15 allowed.</span>
<div class="b" style="left:618px;top:762.5px;width:741px;height:1px;background:#e1e4f5;"></div>
<div class="b" style="left:619px;top:776px;width:11px;height:11px;background:#fff;border:1px solid #b7bfe0;border-radius:6px;"></div>
<span class="t" style="left:634.80px;top:774px;font-size:11.7px;font-weight:400;color:#3e4358;letter-spacing:-0.130px;">Open</span>
<svg class="b" style="left:664.8px;top:779.3px;" width="9" height="6" viewBox="0 0 9 6"><path d="M.7 1l3.800 3.500L8.300 1" fill="none" stroke="#3e4358" stroke-width="1"/></svg>
<svg class="b" style="left:686px;top:775.5px;" width="11" height="12.5" viewBox="0 0 16 20"><path d="M.9 9.800C.2 4.200 3 .4 7.900 .4c4.900 0 7.700 3.400 7.200 8.600l-1 2.200H1.800z" fill="#2b2327"/><path d="M2 9c0-3.600 2.400-5.600 5.900-5.600S13.800 5.400 13.800 9c0 2.400-.3 4.400-1 6.300-.6 1.700-1 3-1 4.100H4.200c0-1.100-.4-2.400-1-4.100C2.300 13.400 2 11.400 2 9z" fill="#e3a78f"/><ellipse cx="7.900" cy="11.800" rx="3.400" ry="4.600" fill="#efbba6"/><path d="M1.600 9.600c.2-3.600 1.800-6.400 6.300-6.400 4.300 0 6.200 2.400 6.300 6-.9-1.700-1.700-3.300-3.600-4.200-2.100 1.100-4.900 1.500-6.900 1.500-.9.800-1.600 1.800-2.100 3.100z" fill="#2b2327"/><ellipse cx="5.400" cy="9.100" rx="1.300" ry=".55" fill="#6d4a3c"/><ellipse cx="10.800" cy="9.100" rx="1.300" ry=".55" fill="#6d4a3c"/><ellipse cx="8" cy="14.500" rx="1.600" ry=".5" fill="#c98378"/><path d="M2.600 19.800c.3-.8 1-1.200 2.100-1.300l.4 1.300zM13.400 19.800c-.3-.8-1-1.200-2.100-1.300l-.4 1.300z" fill="#26262c"/></svg>
<span class="t" style="left:704.50px;top:774px;font-size:11.7px;font-weight:400;color:#4d5880;letter-spacing:0.271px;">stretchcloud</span>
<svg class="b" style="left:776.2px;top:779.3px;" width="9" height="6" viewBox="0 0 9 6"><path d="M.7 1l3.800 3.500L8.300 1" fill="none" stroke="#5b6896" stroke-width="1"/></svg>
<div class="b" style="left:1290.7px;top:707px;width:68.29999999999995px;height:17.3px;background:#e8eafb;border-radius:9px;"></div>
<span class="t" style="left:1297.00px;top:709px;font-size:9.8px;font-weight:700;color:#4f5cd6;letter-spacing:-0.111px;">Adaptability</span>
<div class="b" style="left:1395px;top:636.8px;width:40px;height:40.2px;background:#6aa6e1;border-radius:6px;box-shadow:0 3px 8px rgba(30,40,80,.28);"></div>
<svg class="b" style="left:1402.5px;top:641.3px;" width="24" height="30" viewBox="0 0 24 30"><path d="M12 .3C9.200 2.800 5 4 .8 4.200C.6 8.800 .5 13.600 2.200 18C4 22.600 7.600 26.600 12 29.700C16.400 26.600 20 22.600 21.800 18C23.500 13.600 23.400 8.800 23.200 4.200C19 4 14.800 2.800 12 .3Z" fill="#fff"/><path d="M8.300 15.100l2.900 3L17.400 11.500" fill="none" stroke="#6aa6e1" stroke-width="1.300"/></svg>
<div class="b" style="left:188px;top:698px;width:1248px;height:27px;background:linear-gradient(to bottom,rgba(20,20,30,0),rgba(20,20,30,.035) 50%,rgba(20,20,30,.1));"></div>
<div class="b" style="left:1426px;top:715px;width:10px;height:10px;background:radial-gradient(circle at 0 0,rgba(0,0,0,0) 10.200px,#555 11.200px,#333 13px);"></div>
<div class="b" style="left:188px;top:0px;width:1248px;height:116.5px;background:#fff;box-shadow:0 3px 12px rgba(22,22,30,.16);"></div>
<div class="b" style="left:188px;top:38.8px;width:1248px;height:1px;background:#efeff3;"></div>
<span class="t" style="left:207.50px;top:11px;font-size:12.0px;font-weight:700;color:#2a2f40;letter-spacing:-0.069px;">My Projects</span>
<span class="t" style="left:301.00px;top:11px;font-size:12.0px;font-weight:700;color:#2a2f40;letter-spacing:-0.086px;">My Issues</span>
<span class="t" style="left:384.50px;top:11px;font-size:12.0px;font-weight:700;color:#2a2f40;letter-spacing:-0.390px;">Explore</span>
<svg class="b" style="left:460.5px;top:12.5px;" width="14.5" height="14.5" viewBox="0 0 14.5 14.5"><g fill="none" stroke="#2a2f40" stroke-width="1.5" stroke-linecap="round"><circle cx="6" cy="6" r="4.9"/><path d="M9.700 9.900L13.200 13.400"/></g></svg>
<svg class="b" style="left:1280.8px;top:11.7px;" width="13" height="14.5" viewBox="0 0 13 14.5"><path fill="#2f3348" d="M6.500 1.200c-2.500 0-4.100 1.900-4.100 4.300v3L.9 10.700v.9h11.200v-.9l-1.500-2.200v-3c0-2.400-1.600-4.300-4.100-4.300z"/><rect x="5.300" y="12" width="2.400" height="1.800" rx=".8" fill="#2f3348"/></svg>
<div class="b" style="left:1287.7px;top:5px;width:14px;height:14px;background:#bcc5fb;border-radius:7px;"></div>
<span class="t" style="left:1292.60px;top:6px;font-size:9.5px;font-weight:700;color:#1e2030;">1</span>
<svg class="b" style="left:1322px;top:11.8px;" width="13.5" height="13.5" viewBox="0 0 16 16"><circle cx="8" cy="8" r="8" fill="#2f3348"/><path d="M5.800 6.300c0-1.300 1-2.200 2.300-2.200 1.300 0 2.200.8 2.200 2 0 1.700-2.100 1.700-2.100 3.500" fill="none" stroke="#fff" stroke-width="1.500"/><circle cx="8.100" cy="11.900" r="1" fill="#fff"/></svg>
<svg class="b" style="left:1363.8px;top:11.8px;" width="13" height="13" viewBox="0 0 13 13"><path d="M6.500 .5v12M.5 6.500h12" stroke="#2f3348" stroke-width="1.400" fill="none"/></svg>
<svg class="b" style="left:1399.5px;top:9px;" width="16" height="20" viewBox="0 0 16 20"><path d="M.9 9.800C.2 4.200 3 .4 7.900 .4c4.900 0 7.700 3.400 7.200 8.600l-1 2.200H1.800z" fill="#2b2327"/><path d="M2 9c0-3.600 2.400-5.600 5.900-5.600S13.800 5.400 13.800 9c0 2.400-.3 4.400-1 6.300-.6 1.700-1 3-1 4.100H4.200c0-1.100-.4-2.400-1-4.100C2.300 13.400 2 11.400 2 9z" fill="#e3a78f"/><ellipse cx="7.900" cy="11.800" rx="3.400" ry="4.600" fill="#efbba6"/><path d="M1.600 9.600c.2-3.600 1.800-6.400 6.300-6.400 4.300 0 6.200 2.400 6.300 6-.9-1.700-1.700-3.300-3.600-4.200-2.100 1.100-4.900 1.500-6.900 1.500-.9.800-1.600 1.800-2.100 3.100z" fill="#2b2327"/><ellipse cx="5.400" cy="9.100" rx="1.300" ry=".55" fill="#6d4a3c"/><ellipse cx="10.800" cy="9.100" rx="1.300" ry=".55" fill="#6d4a3c"/><ellipse cx="8" cy="14.500" rx="1.600" ry=".5" fill="#c98378"/><path d="M2.600 19.800c.3-.8 1-1.200 2.100-1.300l.4 1.300zM13.400 19.800c-.3-.8-1-1.200-2.100-1.300l-.4 1.300z" fill="#26262c"/></svg>
<span class="t" style="left:207.50px;top:55px;font-size:11.7px;font-weight:400;color:#5b6a97;letter-spacing:0.271px;">stretchcloud</span>
<svg class="b" style="left:277px;top:58.5px;" width="6" height="9" viewBox="0 0 6 9"><path d="M1 1l4 3.500-4 3.500" fill="none" stroke="#6b7aa3" stroke-width="1"/></svg>
<span class="t" style="left:286.00px;top:55px;font-size:11.7px;font-weight:400;color:#5b6a97;letter-spacing:0.149px;">memrecall</span>
<svg class="b" style="left:345px;top:58.5px;" width="6" height="9" viewBox="0 0 6 9"><path d="M1 1l4 3.500-4 3.500" fill="none" stroke="#6b7aa3" stroke-width="1"/></svg>
<svg class="b" style="left:357.5px;top:56.5px;" width="7" height="12" viewBox="0 0 7 12"><g fill="none" stroke="#3e4358" stroke-width="1"><circle cx="3.500" cy="2" r="1.300"/><circle cx="3.500" cy="10" r="1.300"/><path d="M3.500 3.300V8.700"/></g></svg>
<span class="t" style="left:370.00px;top:55px;font-size:11.7px;font-weight:400;color:#5b6a97;letter-spacing:0.056px;">main</span>
<div class="b" style="left:402px;top:56px;width:12.5px;height:13px;background:#d3f5dc;border-radius:2px;"></div>
<svg class="b" style="left:404.7px;top:59.2px;" width="7" height="7" viewBox="0 0 7 7"><path d="M.9 3.700l1.900 1.900L6.200 1.700" fill="none" stroke="#1d7a3c" stroke-width="1.300"/></svg>
<span class="t" style="left:208.00px;top:86px;font-size:13.6px;font-weight:400;color:#3e4358;letter-spacing:-0.144px;">Summary</span>
<span class="t" style="left:286.00px;top:86px;font-size:13.32px;font-weight:700;color:#262b3c;letter-spacing:-0.280px;">Issues</span>
<span class="t" style="left:347.00px;top:86px;font-size:13.6px;font-weight:400;color:#3e4358;letter-spacing:0.048px;">Security Hotspots</span>
<span class="t" style="left:475.50px;top:86px;font-size:13.6px;font-weight:400;color:#3e4358;letter-spacing:0.016px;">Measures</span>
<span class="t" style="left:556.50px;top:86px;font-size:13.6px;font-weight:400;color:#3e4358;letter-spacing:-0.146px;">Code</span>
<span class="t" style="left:609.50px;top:86px;font-size:13.6px;font-weight:400;color:#3e4358;letter-spacing:0.178px;">Activity</span>
<div class="b" style="left:286px;top:114.5px;width:40px;height:2px;background:#5d6cd0;"></div>
<div class="b" style="left:0px;top:0px;width:188px;height:725px;background:#1e2030;box-shadow:0 0 22px rgba(20,20,28,.22);border-bottom-left-radius:3px;"></div>
<div class="b" style="left:0px;top:0px;width:188px;height:40px;background:#12141f;"></div>
<svg class="b" style="left:13px;top:4px;" width="30" height="30" viewBox="0 0 30 30"><g fill="none" stroke="#fff" stroke-width="1.9" stroke-linecap="round"><path d="M14.730 20.370A6.050 6.050 0 1 1 13.330 17.010"/><path d="M19.270 15.410A5.950 5.950 0 1 1 15.550 19.460"/><path d="M8.200 13.600A6.800 6.800 0 1 1 19.550 18.250"/><path d="M14.370 9.650A3.600 3.600 0 0 1 18.590 12.890"/><path d="M14.460 2.910A10.300 10.300 0 0 1 25.220 11.940"/></g></svg>
<span class="t" style="left:45.00px;top:6px;font-size:15.52px;font-weight:400;color:#fff;letter-spacing:0.402px;">SonarQube</span>
<span class="t" style="left:45.50px;top:20px;font-size:10.96px;font-weight:400;color:#fff;letter-spacing:0.280px;">cloud</span>
<span class="t" style="left:15.50px;top:55px;font-size:13.5px;font-weight:700;color:#fff;letter-spacing:-0.255px;">memrecall</span>
<div class="b" style="left:14.5px;top:81px;width:38.5px;height:13.5px;background:#c3cbe8;border-radius:2px;"></div>
<span class="t" style="left:17.20px;top:83px;font-size:9.9px;font-weight:700;color:#1e2030;letter-spacing:-0.485px;">PUBLIC</span>
<svg class="b" style="left:62px;top:81.2px;" width="14" height="14" viewBox="0 0 16 16"><circle cx="8" cy="8" r="7.6" fill="#1e2030"/><path fill="#fff" d="M8 0C3.58 0 0 3.58 0 8c0 3.54 2.29 6.53 5.47 7.59.4.07.55-.17.55-.38 0-.19-.01-.82-.01-1.49-2.01.37-2.53-.49-2.69-.94-.09-.23-.48-.94-.82-1.13-.28-.15-.68-.52-.01-.53.63-.01 1.08.58 1.23.82.72 1.21 1.87.87 2.33.66.07-.52.28-.87.51-1.07-1.78-.2-3.64-.89-3.64-3.95 0-.87.31-1.59.82-2.15-.08-.2-.36-1.02.08-2.12 0 0 .67-.21 2.2.82.64-.18 1.32-.27 2-.27.68 0 1.36.09 2 .27 1.53-1.04 2.2-.82 2.2-.82.44 1.1.16 1.92.08 2.12.51.56.82 1.27.82 2.15 0 3.07-1.87 3.75-3.65 3.95.29.25.54.73.54 1.48 0 1.07-.01 1.93-.01 2.2 0 .21.15.46.55.38A8.013 8.013 0 0016 8c0-4.42-3.58-8-8-8z"/></svg>
<svg class="b" style="left:88.3px;top:81.2px;" width="13.4" height="13" viewBox="0 0 16 15.4"><path fill="#f0925c" d="M8 .6l2.2 4.7 5.1.7-3.7 3.6.9 5.1L8 12.3 3.5 14.7l.9-5.1L.7 6l5.1-.7z"/></svg>
<svg class="b" style="left:13.5px;top:128.5px;" width="13" height="12" viewBox="0 0 13 12"><g fill="none" stroke="#e3e7f4" stroke-width="1.15"><rect x="1.050" y="1" width="4.300" height="5.100" rx="1"/><rect x="7.900" y="1" width="4.300" height="2.800" rx="1"/><rect x="1.050" y="8" width="4.300" height="3" rx="1"/><rect x="7.900" y="5.900" width="4.300" height="5.100" rx="1"/></g></svg>
<span class="t" style="left:47.50px;top:128px;font-size:11.6px;font-weight:700;color:#e3e7f4;letter-spacing:-0.220px;">Overview</span>
<div class="b" style="left:2.5px;top:162px;width:178.5px;height:41.5px;background:#12141f;border-radius:4px;"></div>
<svg class="b" style="left:16px;top:176px;" width="8" height="14" viewBox="0 0 8 14"><g fill="none" stroke="#e3e7f4" stroke-width="1.1"><circle cx="4" cy="2.2" r="1.5"/><circle cx="4" cy="11.8" r="1.5"/><path d="M4 3.7V10.3"/></g></svg>
<span class="t" style="left:47.50px;top:176px;font-size:11.6px;font-weight:700;color:#e3e7f4;letter-spacing:-0.199px;">Main Branch</span>
<svg class="b" style="left:13px;top:224.5px;" width="14" height="13" viewBox="0 0 14 13"><g fill="none" stroke="#e3e7f4" stroke-width="1.1"><circle cx="2.6" cy="2.2" r="1.5"/><circle cx="2.6" cy="10.8" r="1.5"/><circle cx="11" cy="10.8" r="1.5"/><path d="M2.6 3.7V9.3M11 9.3V4.6c0-1.2-.8-2-2-2H7.2"/><path d="M8.6 .7L6.8 2.6 8.6 4.5" stroke-linejoin="round"/></g></svg>
<span class="t" style="left:47.50px;top:225px;font-size:11.55px;font-weight:700;color:#e3e7f4;letter-spacing:-0.280px;">Pull Requests</span>
<div class="b" style="left:156px;top:223px;width:16px;height:16px;background:#3b3e57;border-radius:8px;"></div>
<span class="t" style="left:160.60px;top:224px;font-size:11.0px;font-weight:700;color:#e3e7f4;">0</span>
<svg class="b" style="left:13.5px;top:272px;" width="13" height="13" viewBox="0 0 13 13"><g fill="none" stroke="#e3e7f4" stroke-width="1.1"><circle cx="2.8" cy="2.2" r="1.5"/><circle cx="2.8" cy="10.8" r="1.5"/><circle cx="10" cy="2.8" r="1.5"/><path d="M2.8 3.7V9.3M10 4.3c0 2.4-1.6 3-3.6 3.2-2 .2-3.6.8-3.6 1.8"/></g></svg>
<span class="t" style="left:47.50px;top:272px;font-size:11.6px;font-weight:700;color:#e3e7f4;letter-spacing:-0.270px;">Branches</span>
<div class="b" style="left:156px;top:271px;width:16px;height:16px;background:#3b3e57;border-radius:8px;"></div>
<span class="t" style="left:161.20px;top:272px;font-size:11.0px;font-weight:700;color:#e3e7f4;">1</span>
<svg class="b" style="left:14px;top:582px;" width="12.5" height="12.5" viewBox="0 0 16 16"><circle cx="8" cy="8" r="8" fill="#d6dbf0"/><rect x="7.100" y="7" width="1.800" height="4.800" fill="#5a607c"/><circle cx="8" cy="4.700" r="1.100" fill="#5a607c"/></svg>
<span class="t" style="left:47.50px;top:582px;font-size:11.6px;font-weight:700;color:#e3e7f4;letter-spacing:-0.218px;">Information</span>
<svg class="b" style="left:13.6px;top:630.2px;" width="12.8" height="12.8" viewBox="0 0 16 16"><g fill="none" stroke="#e3e7f4" stroke-width="1.35" stroke-linejoin="round"><circle cx="8" cy="8" r="1.300" fill="#e3e7f4"/><path d="M6.7 1h2.6l.4 2 1.3.7 1.9-.7 1.3 2.2-1.5 1.4v1.6l1.5 1.4-1.3 2.2-1.9-.7-1.3.7-.4 2H6.7l-.4-2L5 11.1l-1.9.7-1.3-2.2 1.5-1.4V6.6L1.800 5.200l1.300-2.200L5 3.700 6.300 3z"/></g></svg>
<span class="t" style="left:47.50px;top:630px;font-size:11.6px;font-weight:700;color:#e3e7f4;letter-spacing:-0.248px;">Administration</span>
<div class="b" style="left:0px;top:666.5px;width:188px;height:1px;background:#30344a;"></div>
<svg class="b" style="left:14px;top:689px;" width="11.5" height="11" viewBox="0 0 11.5 11"><path d="M10.500 5.500H1.500M5.300 1.300L1.200 5.500l4.100 4.200" fill="none" stroke="#e3e7f4" stroke-width="1.2" stroke-linecap="round" stroke-linejoin="round"/></svg>
<span class="t" style="left:41.00px;top:689px;font-size:11.5px;font-weight:700;color:#e3e7f4;letter-spacing:-0.280px;">Collapse</span>
</div>
</body></html>
